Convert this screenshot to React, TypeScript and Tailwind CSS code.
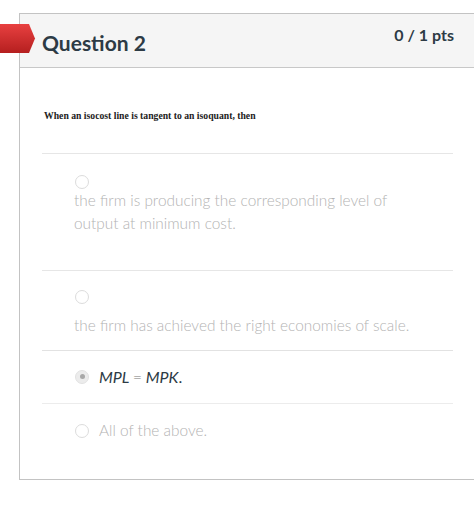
import React from "react";

function Radio({ selected = false }: { selected?: boolean }) {
  return (
    <span
      className={
        "flex h-[14px] w-[14px] shrink-0 items-center justify-center rounded-full border " +
        (selected ? "border-[#e2e2e2] bg-[#ececec]" : "border-[#dcdcdc] bg-white")
      }
    >
      {selected && <span className="h-[5px] w-[5px] rounded-full bg-[#a9a9a9]" />}
    </span>
  );
}

export default function App() {
  return (
    <div className="relative h-[517px] w-[474px] overflow-hidden bg-white pt-[13px] pl-[19px] font-['Lato','Noto_Sans',sans-serif]">
      <div className="border border-r-0 border-[#c3c3c3] bg-white">
        <div className="flex h-[54px] items-start justify-between border-b border-[#c8c8c8] bg-[#f5f5f5] pl-[22px] pr-[20px]">
          <div className="mt-[16px] text-[21px] font-bold leading-[1.2] text-[#2d3b45]">Question 2</div>
          <div className="mt-[11px] text-[16px] font-bold leading-[1.2] text-[#2d3b45]">0 / 1 pts</div>
        </div>
        <div className="pt-[42px] pl-[24px] font-['Liberation_Serif','Times_New_Roman',serif] text-[9.7px] font-bold leading-[12px] text-[#222]">
          When an isocost line is tangent to an isoquant, then
        </div>
        <div className="ml-[22px] mr-[21px] mt-[31px] pb-[37px]">
          <div className="border-t border-[#e6e6e6] pl-[33px] pt-[21px] pb-[35px]">
            <Radio />
            <div className="text-[15.4px] font-light leading-[23px] text-[#b3b3b3] -ml-[1px]">
              the firm is producing the corresponding level of
              <br />
              output at minimum cost.
            </div>
          </div>
          <div className="border-t border-[#e6e6e6] pl-[33px] pt-[19px] pb-[13px]">
            <Radio />
            <div className="mt-[10px] -ml-[1px] text-[15.4px] font-light leading-[23px] text-[#b3b3b3]">
              the firm has achieved the right economies of scale.
            </div>
          </div>
          <div className="flex items-center gap-[10px] border-t border-[#e2e2e2] pl-[33px] pt-[14px] pb-[15px]">
            <Radio selected />
            <span className="text-[16px] italic leading-[23px] text-[#2d3b45]">
              MPL <span className="not-italic font-light text-[#777]">=</span> MPK<span className="not-italic">.</span>
            </span>
          </div>
          <div className="flex items-center gap-[10px] border-t border-[#ececec] pl-[33px] pt-[15px]">
            <Radio />
            <span className="text-[15.4px] font-light leading-[23px] text-[#b3b3b3]">All of the above.</span>
          </div>
        </div>
      </div>
      <svg className="absolute left-0 top-[24px]" width="36" height="30" viewBox="0 0 36 30">
        <defs>
          <linearGradient id="flag" x1="0" y1="0" x2="0" y2="1">
            <stop offset="0" stopColor="#e84040" />
            <stop offset="1" stopColor="#b51f1f" />
          </linearGradient>
        </defs>
        <polygon points="0,0 29,0 35,14.5 29,29 0,29" fill="url(#flag)" />
      </svg>
    </div>
  );
}
